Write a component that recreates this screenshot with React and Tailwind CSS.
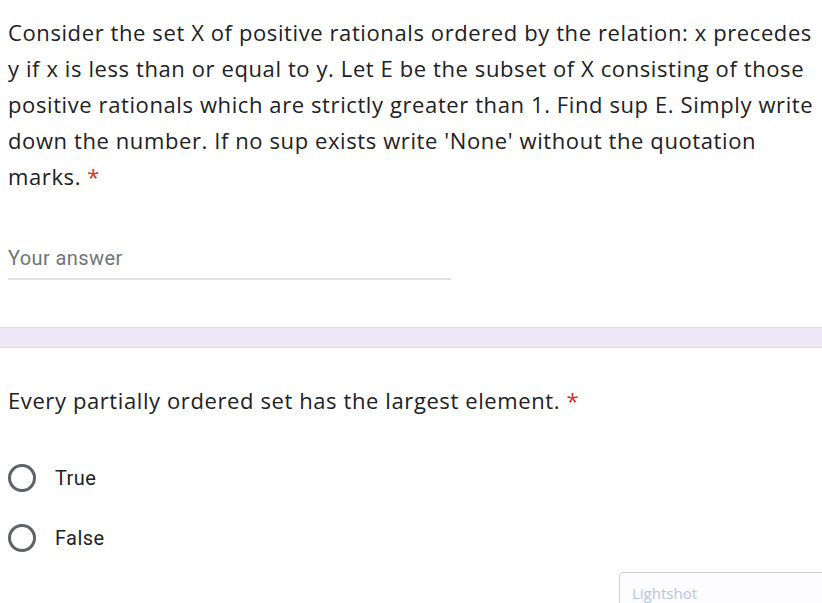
export default function App() {
  const lines = [
    'Consider the set X of positive rationals ordered by the relation: x precedes',
    'y if x is less than or equal to y. Let E be the subset of X consisting of those',
    'positive rationals which are strictly greater than 1. Find sup E. Simply write',
    "down the number. If no sup exists write 'None' without the quotation",
  ];
  const sans = { fontFamily: '"Open Sans", "Noto Sans", sans-serif' };
  return (
    <div className="relative w-[822px] h-[603px] overflow-hidden bg-white text-[#202124]">
      {/* question 1 */}
      <div className="pl-[8px] pt-[14px] text-[22px] leading-[36px] tracking-[0.6px]" style={sans}>
        {lines.map((l) => (
          <div key={l} className="whitespace-nowrap">{l}</div>
        ))}
        <div className="whitespace-nowrap">
          marks. <span className="text-[#d93025]">*</span>
        </div>
      </div>

      <div className="pl-[8px] pt-[51px] w-[451px]">
        <div className="text-[20px] leading-[26px] text-[#70757a] font-['Roboto',sans-serif] tracking-[0.4px]">
          Your answer
        </div>
        <div className="mt-[7px] h-[2px] bg-[#e0e0e0]" />
      </div>

      {/* section divider */}
      <div className="mt-[47px] h-[21px] bg-[#ede9f7] border-y border-[#dadce0]" />

      {/* question 2 */}
      <div className="pl-[8px] pt-[34px] text-[22px] leading-[36px] tracking-[0.6px]" style={sans}>
        <div className="whitespace-nowrap">
          Every partially ordered set has the largest element.{' '}
          <span className="text-[#d93025]">*</span>
        </div>
      </div>

      <div className="pl-[8px] pt-[46px] flex flex-col gap-[32px] font-['Roboto',sans-serif] text-[20px] tracking-[0.4px]">
        {['True', 'False'].map((o) => (
          <div key={o} className="flex items-center h-[28px]">
            <div className="w-[28px] h-[28px] rounded-full border-[3px] border-[#5f6368]" />
            <span className="ml-[19px] text-[#202124]">{o}</span>
          </div>
        ))}
      </div>

      {/* lightshot overlay */}
      <div className="absolute left-[619px] top-[572px] w-[220px] h-[40px] rounded-tl-[4px] border border-[#cfcfcf] bg-[#fdfdff] pl-[12px] pt-[9px] text-[15px] text-[#b4c4e4] font-['Open_Sans',sans-serif]">
        Lightshot
      </div>
    </div>
  );
}
